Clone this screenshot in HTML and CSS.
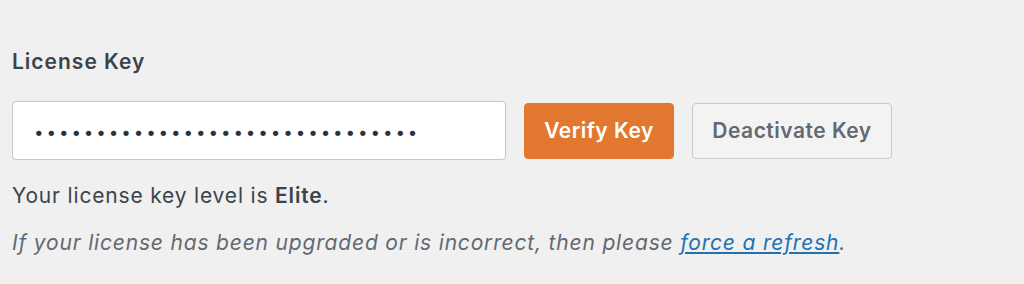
FILE: index.html
```html
<!DOCTYPE html>
<html>
<head>
<meta charset="utf-8">
<link rel="stylesheet" href="styles.css">
</head>
<body>
<div class="section">
  <h2 class="title">License Key</h2>
  <div class="row">
    <div class="key-input">•••••••••••••••••••••••••••••••</div>
    <button class="btn btn-primary">Verify Key</button>
    <button class="btn btn-secondary">Deactivate Key</button>
  </div>
  <p class="level">Your license key level is <strong>Elite</strong>.</p>
  <p class="note">If your license has been upgraded or is incorrect, then please <a href="#">force a refresh</a>.</p>
</div>
</body>
</html>
```
FILE: styles.css
```css
html, body {
  margin: 0;
  padding: 0;
  background: #f0f0f1;
}
body {
  font-family: Inter, "Noto Sans", sans-serif;
  color: #3c434a;
}
.section {
  padding: 48px 12px 0 12px;
}
.title {
  margin: 0;
  font-size: 21px;
  font-weight: 600;
  letter-spacing: 1px;
  line-height: 28px;
  color: #3c434a;
}
.row {
  display: flex;
  align-items: center;
  gap: 18px;
  margin-top: 25px;
}
.key-input {
  box-sizing: border-box;
  width: 494px;
  height: 59px;
  background: #fff;
  border: 1px solid #c7c7c7;
  border-radius: 4px;
  padding-left: 21px;
  font-size: 17px;
  letter-spacing: 2.9px;
  line-height: 60px;
  color: #2c3338;
}
.btn {
  box-sizing: border-box;
  height: 56px;
  border-radius: 4px;
  font-family: Inter, "Noto Sans", sans-serif;
  font-size: 21px;
  font-weight: 600;
  letter-spacing: 0.5px;
  padding: 0;
  cursor: pointer;
}
.btn-primary {
  width: 150px;
  background: #e27730;
  border: 1px solid #e27730;
  color: #fff;
}
.btn-secondary {
  width: 200px;
  background: #f3f3f3;
  border: 1px solid #c9c9c9;
  color: #646970;
}
.level {
  margin: 22px 0 0 0;
  font-size: 21px;
  letter-spacing: 0.82px;
  line-height: 28px;
}
.level strong {
  font-weight: 600;
}
.note {
  margin: 19px 0 0 0;
  font-size: 21px;
  letter-spacing: 0.82px;
  line-height: 28px;
  font-style: italic;
  color: #646970;
}
.note a {
  color: #2271b1;
  text-decoration: underline;
}
```
